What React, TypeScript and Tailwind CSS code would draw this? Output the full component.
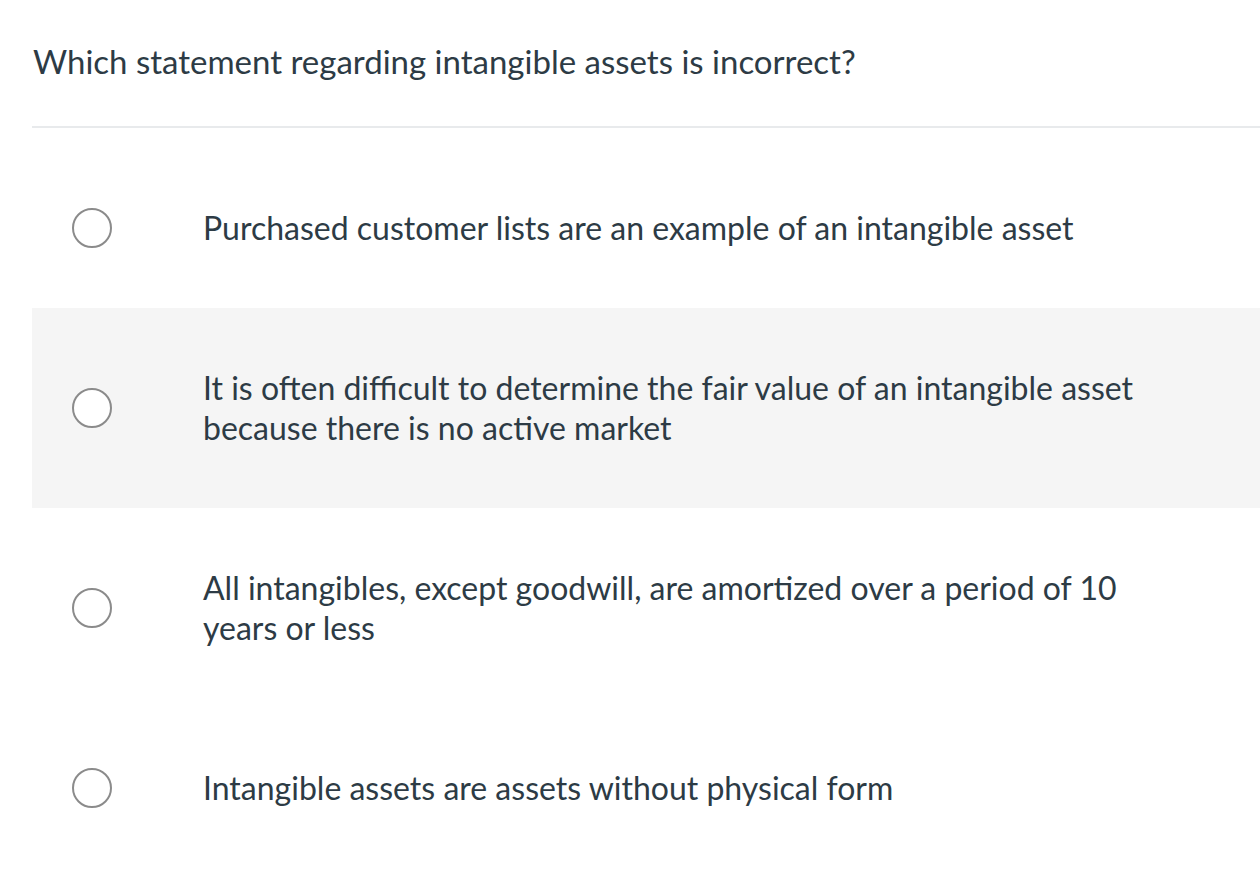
import React from 'react';

const options = [
    'Purchased customer lists are an example of an intangible asset',
    'It is often difficult to determine the fair value of an intangible asset because there is no active market',
    'All intangibles, except goodwill, are amortized over a period of 10 years or less',
    'Intangible assets are assets without physical form',
];

const App: React.FC = () => {
    return (
        <div className="min-h-screen bg-white pl-[32px] text-[#2d3b45]" style={{ fontFamily: 'Lato, "Open Sans", sans-serif' }}>
            <h1 className="pt-[41px] pl-[1px] text-[33px] leading-[40px] font-normal">
                Which statement regarding intangible assets is incorrect?
            </h1>
            <div className="mt-[45px] h-[2px] bg-[#e8eaec]" />
            <div className="mt-[20px]">
                {options.map((text, i) => (
                    <div key={i} className={`flex items-center py-[60px] ${i === 1 ? 'bg-[#f5f5f5]' : ''}`}>
                        <div className="ml-[40px] h-[40px] w-[40px] shrink-0 rounded-full border-2 border-[#8b8b8b] bg-white" />
                        <div className="ml-[91px] max-w-[950px] text-[32px] leading-[40px]">{text}</div>
                    </div>
                ))}
            </div>
        </div>
    );
};

export default App;
